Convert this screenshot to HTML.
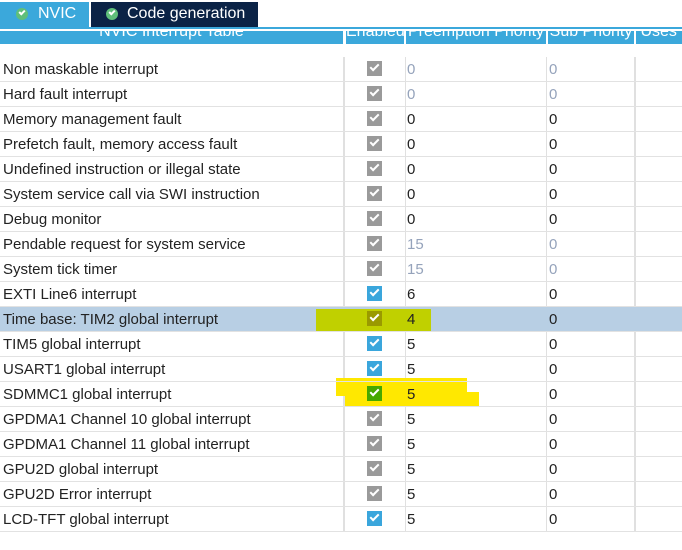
<!DOCTYPE html><html><head><style>
body{margin:0;width:682px;height:550px;background:#fff;position:relative;overflow:hidden;font-family:"Liberation Sans",sans-serif;}
.a{position:absolute}
.tab{position:absolute;top:2px;height:24px;color:#fff;font-size:16px;line-height:24px}
.ic{position:absolute;top:8px;width:12px;height:12px;border-radius:50%;background:#5fbf7a}
.ic:after{content:"";position:absolute;left:3px;top:2px;width:4px;height:2px;border-left:2px solid #fff;border-bottom:2px solid #fff;transform:rotate(-45deg)}
.h{position:absolute;top:31px;height:13px;background:#3ba8db;overflow:hidden;color:#fff;font-size:16px;line-height:2px;text-align:center}
.row{position:absolute;left:0;width:682px;height:24px;border-bottom:1px solid #e2e2e2;font-size:15px;line-height:26px;color:#222}
.row span{position:absolute}
.cb{position:absolute;left:367px;top:4px;width:15px;height:15px;background:#9a9a9a}
.cb.b{background:#3aa6dc}
.cb:after{content:"";position:absolute;left:3px;top:3px;width:7px;height:3px;border-left:2px solid #fff;border-bottom:2px solid #fff;transform:rotate(-45deg)}
.g{color:#95a3bb}
.v{position:absolute;top:57px;height:475px;background:#e0e0e0}
</style></head><body>
<div class="a" style="left:0;top:2px;width:89px;height:25px;background:#3ba8db"></div>
<div class="a" style="left:91px;top:2px;width:167px;height:25px;background:#0b2346"></div>
<div class="ic" style="left:16px"></div><div class="tab" style="left:38px">NVIC</div>
<div class="ic" style="left:106px"></div><div class="tab" style="left:127px">Code generation</div>
<div class="a" style="left:0;top:27px;width:682px;height:2px;background:#3ba8db"></div>
<div class="h" style="left:0;width:343px;text-indent:0">NVIC Interrupt Table</div>
<div class="h" style="left:346px;width:58px">Enabled</div>
<div class="h" style="left:406px;width:140px">Preemption Priority</div>
<div class="h" style="left:548px;width:86px">Sub Priority</div>
<div class="h" style="left:636px;width:46px;text-align:left">&nbsp;Uses</div>
<div class="v" style="left:343px;width:2px"></div>
<div class="v" style="left:405px;width:1px"></div>
<div class="v" style="left:546px;width:1px"></div>
<div class="v" style="left:634px;width:2px"></div>
<div id="t"></div>
<script>
var d=[["Non maskable interrupt",0,"0","0",1],["Hard fault interrupt",0,"0","0",1],["Memory management fault",0,"0","0"],["Prefetch fault, memory access fault",0,"0","0"],["Undefined instruction or illegal state",0,"0","0"],["System service call via SWI instruction",0,"0","0"],["Debug monitor",0,"0","0"],["Pendable request for system service",0,"15","0",1],["System tick timer",0,"15","0",1],["EXTI Line6 interrupt",1,"6","0"],["Time base: TIM2 global interrupt",2,"4","0"],["TIM5 global interrupt",1,"5","0"],["USART1 global interrupt",1,"5","0"],["SDMMC1 global interrupt",3,"5","0"],["GPDMA1 Channel 10 global interrupt",0,"5","0"],["GPDMA1 Channel 11 global interrupt",0,"5","0"],["GPU2D global interrupt",0,"5","0"],["GPU2D Error interrupt",0,"5","0"],["LCD-TFT global interrupt",1,"5","0"]];
var h="";d.forEach(function(r,i){var y=57+i*25;
var cb=r[1]==1?"cb b":"cb";var cs=r[1]==2?"background:#9a9a00":r[1]==3?"background:#46a800":"";
if(r[1]==2)h+='<div class="a" style="left:0;top:'+y+'px;width:682px;height:25px;background:#b8cfe4"></div><div class="a" style="left:316px;top:309px;width:115px;height:22px;background:#c0d000;z-index:1"></div>';
if(r[1]==3)h+='<div class="a" style="left:336px;top:378px;width:131px;height:18px;background:#ffe800;z-index:1"></div><div class="a" style="left:345px;top:392px;width:134px;height:15px;background:#ffe800;z-index:1"></div>';
var gc=r[4]?' class="g"':'';
h+='<div class="row" style="top:'+y+'px;z-index:2"><span style="left:3px">'+r[0]+'</span><div class="'+cb+'" style="'+cs+'"></div><span'+gc+' style="left:407px">'+r[2]+'</span><span'+gc+' style="left:549px">'+r[3]+'</span></div>';});
document.getElementById("t").innerHTML=h;
</script>
</body></html>
